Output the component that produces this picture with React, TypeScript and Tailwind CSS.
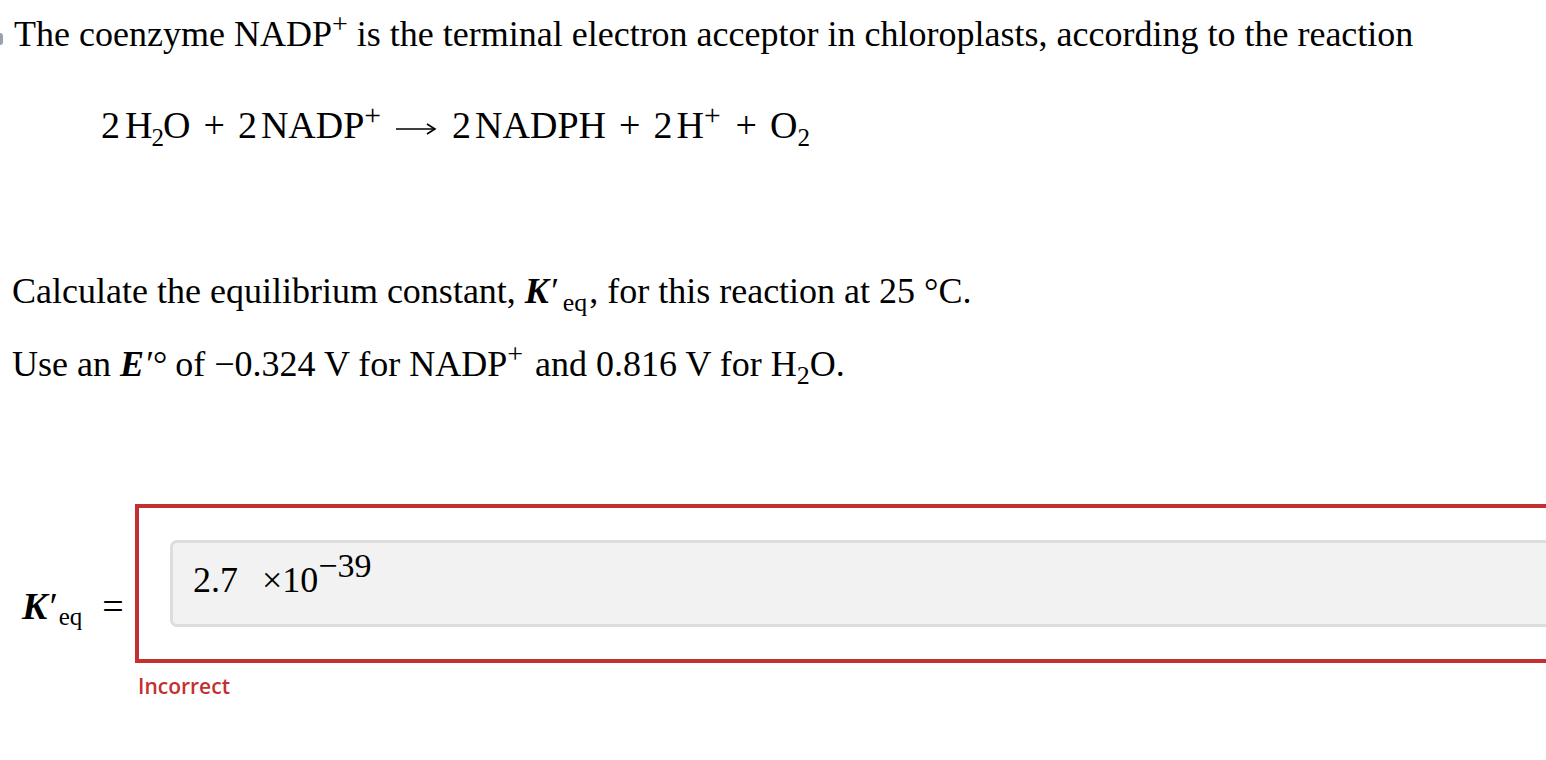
import { ReactNode } from 'react';

const serif = { fontFamily: '"Liberation Serif", "Times New Roman", serif' };

const Sub = ({ children }: { children: ReactNode }) => (
  <sub className="text-[0.72em] relative top-[0.3em] align-baseline">{children}</sub>
);

const Sup = ({ children }: { children: ReactNode }) => (
  <sup className="text-[0.78em] relative -top-[0.45em] align-baseline">{children}</sup>
);

const Plus = () => <span className="mx-[13px]">+</span>;

const Arrow = () => (
  <svg width="42" height="16" viewBox="0 0 42 16" className="inline-block ml-[14px] mr-[15px] align-middle">
    <path d="M1 8 H39" stroke="#000" strokeWidth="1.6" />
    <path d="M32 3 L40 8 L32 13" stroke="#000" strokeWidth="1.6" fill="none" />
  </svg>
);

const KPrime = () => (
  <>
    <span className="font-bold italic">K</span>
    <span className="italic">′</span>
  </>
);

export default function App() {
  return (
    <div className="w-[1546px] h-[760px] overflow-hidden bg-white text-black" style={serif}>
      <div className="flex items-start pt-[12px]">
        <div className="w-[3px] h-[12px] mt-[21px] bg-gray-400 rounded-r shrink-0" />
        <p className="ml-[11px] text-[36px] leading-[44px] whitespace-nowrap">
          The coenzyme NADP<Sup>+</Sup> is the terminal electron acceptor in chloroplasts, according to the reaction
        </p>
      </div>

      <p className="mt-[46px] pl-[101px] text-[38px] leading-[46px] whitespace-nowrap">
        2<span className="ml-[5px]">H</span>
        <sub className="text-[0.66em] relative top-[0.3em] align-baseline -ml-[1px]">2</sub>
        <span className="-ml-[1px]">O</span>
        <Plus />2<span className="ml-[4px]">NADP</span>
        <Sup>+</Sup>
        <Arrow />2<span className="ml-[4px]">NADPH</span>
        <Plus />2<span className="ml-[4px]">H</span>
        <Sup>+</Sup>
        <span className="ml-[15px] mr-[13px]">+</span>O
        <sub className="text-[0.66em] relative top-[0.3em] align-baseline">2</sub>
      </p>

      <p className="mt-[121px] pl-[12px] text-[36px] leading-[44px] whitespace-nowrap">
        Calculate the equilibrium constant, <KPrime />
        <span className="ml-[6px]">
          <Sub>eq</Sub>
        </span>
        <span className="ml-[2px]">,</span> for this reaction at 25 °C.
      </p>

      <p className="mt-[29px] pl-[12px] text-[36px] leading-[44px] whitespace-nowrap">
        Use an <span className="font-bold italic">E</span>
        <span className="italic">′°</span> of −0.324 V for NADP<Sup>+</Sup>
        <span className="ml-[12px]">and 0.816 V for H</span>
        <Sub>2</Sub>O.
      </p>

      <div className="mt-[118px] flex items-start">
        <div className="w-[135px] shrink-0 pl-[22px] pt-[82px] flex items-baseline text-[38px] leading-[40px] whitespace-nowrap">
          <KPrime />
          <span className="text-[25px] ml-[3px] relative top-[6px]">eq</span>
          <span className="ml-[20px]">=</span>
        </div>
        <div className="flex flex-col shrink-0">
          <div className="w-[1430px] border-[4px] border-[#c4302f] pt-[32px] pb-[32px] pl-[31px]">
            <div className="h-[87px] rounded-[7px] border-[3px] border-[#dddddd] bg-[#f2f2f2] pl-[20px] pt-[17px] text-[36px] leading-[40px] whitespace-nowrap">
              2.7<span className="ml-[24px]">×10</span>
              <sup className="text-[34px] relative -top-[15px] align-baseline">−39</sup>
            </div>
          </div>
          <p
            className="mt-[9px] ml-[3px] text-[21px] leading-[28px] font-semibold text-[#c4302f]"
            style={{ fontFamily: '"Open Sans", "Liberation Sans", sans-serif' }}
          >
            Incorrect
          </p>
        </div>
      </div>
    </div>
  );
}
